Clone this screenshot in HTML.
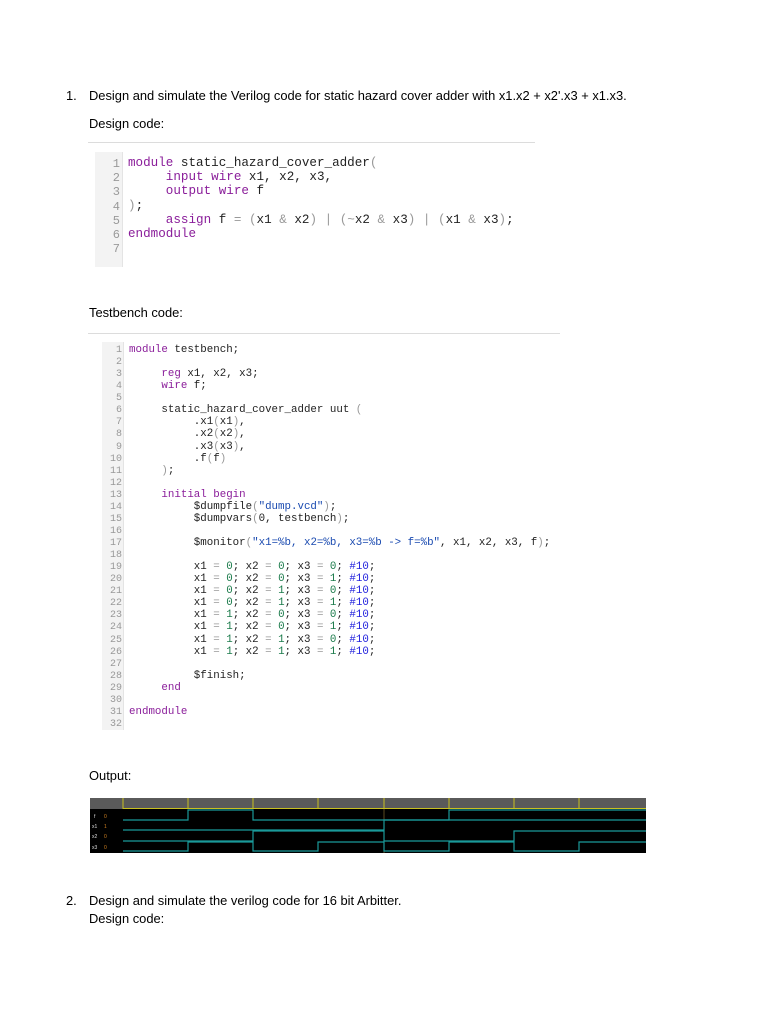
<!DOCTYPE html>
<html><head><meta charset="utf-8"><style>
body{margin:0;width:768px;height:1024px;background:#fff;position:relative;font-family:"Liberation Sans",sans-serif;color:#000;overflow:hidden}
.t{position:absolute;font-size:12.9px;white-space:nowrap}
.hr{position:absolute;height:1px;background:#dcdcdc}
.code{position:absolute;font-family:"Liberation Mono",monospace;white-space:pre;color:#222}
.gut{position:absolute;background:#f3f3f3;border-right:1px solid #e4e4e4}
.ln{position:absolute;font-family:"Liberation Mono",monospace;color:#999;text-align:right;white-space:pre}
.k{color:#8a1d9a}.s{color:#1a4ab0}.n{color:#1a7a4a}.o{color:#999}.h{color:#2222dd}
</style></head><body>
<div class="t" style="left:66px;top:88px">1.</div>
<div class="t" style="left:89px;top:88px">Design and simulate the Verilog code for static hazard cover adder with x1.x2 + x2'.x3 + x1.x3.</div>
<div class="t" style="left:89px;top:116px">Design code:</div>
<div class="hr" style="left:88px;top:142px;width:447px"></div>
<div class="gut" style="left:95px;top:152px;width:27px;height:115px"></div>
<div class="ln" style="left:95px;top:157px;width:25px;font-size:12px;line-height:14.2px">1
2
3
4
5
6
7</div>
<div class="code" style="left:128px;top:156px;font-size:12.6px;line-height:14.2px"><span class="k">module</span> static_hazard_cover_adder<span class="o">(</span>
     <span class="k">input wire</span> x1, x2, x3,
     <span class="k">output wire</span> f
<span class="o">)</span>;
     <span class="k">assign</span> f <span class="o">=</span> <span class="o">(</span>x1 <span class="o">&amp;</span> x2<span class="o">)</span> <span class="o">|</span> <span class="o">(~</span>x2 <span class="o">&amp;</span> x3<span class="o">)</span> <span class="o">|</span> <span class="o">(</span>x1 <span class="o">&amp;</span> x3<span class="o">)</span>;
<span class="k">endmodule</span>
</div>
<div class="t" style="left:89px;top:305px">Testbench code:</div>
<div class="hr" style="left:88px;top:333px;width:472px"></div>
<div class="gut" style="left:102px;top:342px;width:21px;height:388px"></div>
<div class="ln" style="left:100px;top:345px;width:22px;font-size:10px;line-height:12.06px">1
2
3
4
5
6
7
8
9
10
11
12
13
14
15
16
17
18
19
20
21
22
23
24
25
26
27
28
29
30
31
32</div>
<div class="code" style="left:129px;top:344px;font-size:10.8px;line-height:12.06px"><span class="k">module</span> testbench;

     <span class="k">reg</span> x1, x2, x3;
     <span class="k">wire</span> f;

     static_hazard_cover_adder uut <span class="o">(</span>
          .x1<span class="o">(</span>x1<span class="o">)</span>,
          .x2<span class="o">(</span>x2<span class="o">)</span>,
          .x3<span class="o">(</span>x3<span class="o">)</span>,
          .f<span class="o">(</span>f<span class="o">)</span>
     <span class="o">)</span>;

     <span class="k">initial begin</span>
          $dumpfile<span class="o">(</span><span class="s">"dump.vcd"</span><span class="o">)</span>;
          $dumpvars<span class="o">(</span>0, testbench<span class="o">)</span>;

          $monitor<span class="o">(</span><span class="s">"x1=%b, x2=%b, x3=%b -&gt; f=%b"</span>, x1, x2, x3, f<span class="o">)</span>;

          x1 <span class="o">=</span> <span class="n">0</span>; x2 <span class="o">=</span> <span class="n">0</span>; x3 <span class="o">=</span> <span class="n">0</span>; <span class="h">#10</span>;
          x1 <span class="o">=</span> <span class="n">0</span>; x2 <span class="o">=</span> <span class="n">0</span>; x3 <span class="o">=</span> <span class="n">1</span>; <span class="h">#10</span>;
          x1 <span class="o">=</span> <span class="n">0</span>; x2 <span class="o">=</span> <span class="n">1</span>; x3 <span class="o">=</span> <span class="n">0</span>; <span class="h">#10</span>;
          x1 <span class="o">=</span> <span class="n">0</span>; x2 <span class="o">=</span> <span class="n">1</span>; x3 <span class="o">=</span> <span class="n">1</span>; <span class="h">#10</span>;
          x1 <span class="o">=</span> <span class="n">1</span>; x2 <span class="o">=</span> <span class="n">0</span>; x3 <span class="o">=</span> <span class="n">0</span>; <span class="h">#10</span>;
          x1 <span class="o">=</span> <span class="n">1</span>; x2 <span class="o">=</span> <span class="n">0</span>; x3 <span class="o">=</span> <span class="n">1</span>; <span class="h">#10</span>;
          x1 <span class="o">=</span> <span class="n">1</span>; x2 <span class="o">=</span> <span class="n">1</span>; x3 <span class="o">=</span> <span class="n">0</span>; <span class="h">#10</span>;
          x1 <span class="o">=</span> <span class="n">1</span>; x2 <span class="o">=</span> <span class="n">1</span>; x3 <span class="o">=</span> <span class="n">1</span>; <span class="h">#10</span>;

          $finish;
     <span class="k">end</span>

<span class="k">endmodule</span>
</div>
<div class="t" style="left:89px;top:768px">Output:</div>
<svg style="position:absolute;left:90px;top:798px" width="556" height="55" viewBox="0 0 556 55">
<rect width="556" height="55" fill="#000"/>
<rect width="556" height="11" fill="#5a5a5a"/>
<g stroke="#c8c020" stroke-width="1">
<line x1="33" y1="0" x2="33" y2="11"/><line x1="98" y1="0" x2="98" y2="11"/><line x1="163" y1="0" x2="163" y2="11"/><line x1="228" y1="0" x2="228" y2="11"/><line x1="294" y1="0" x2="294" y2="11"/><line x1="359" y1="0" x2="359" y2="11"/><line x1="424" y1="0" x2="424" y2="11"/><line x1="489" y1="0" x2="489" y2="11"/>
<line x1="33" y1="10.5" x2="556" y2="10.5"/>
</g>
<line x1="294" y1="11" x2="294" y2="55" stroke="#5a4a20"/>
<g font-family="Liberation Sans" font-size="5" fill="#ddd"><text x="4" y="20">f</text><text x="14" y="20" fill="#d08020">0</text><text x="2" y="30">x1</text><text x="14" y="30" fill="#d08020">1</text><text x="2" y="40">x2</text><text x="14" y="40" fill="#d08020">0</text><text x="2" y="51">x3</text><text x="14" y="51" fill="#d08020">0</text></g>
<g fill="none" stroke-width="1.2">
<path d="M33 22H98V12H163V22H359V12H556" stroke="#1a9a9a"/>
<path d="M33 32H294V22H556" stroke="#1a9a9a"/>
<path d="M33 43H163V33H294V43H424V33H556" stroke="#1a9a9a"/>
<path d="M33 53H98V44H163V53H228V44H294V53H359V44H424V53H489V44H556" stroke="#1a9a9a"/>
</g>
</svg>
<div class="t" style="left:66px;top:893px">2.</div>
<div class="t" style="left:89px;top:893px">Design and simulate the verilog code for 16 bit Arbitter.</div>
<div class="t" style="left:89px;top:911px">Design code:</div>
</body></html>
